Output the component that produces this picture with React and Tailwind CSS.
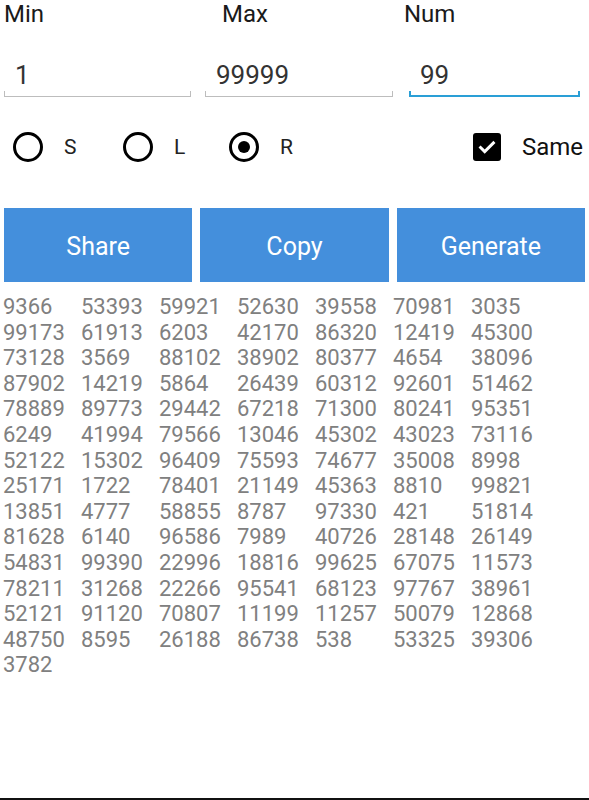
// Random number generator screen: range inputs, mode radios, actions and the result list.
const rows = [
    ['9366', '53393', '59921', '52630', '39558', '70981', '3035'],
    ['99173', '61913', '6203', '42170', '86320', '12419', '45300'],
    ['73128', '3569', '88102', '38902', '80377', '4654', '38096'],
    ['87902', '14219', '5864', '26439', '60312', '92601', '51462'],
    ['78889', '89773', '29442', '67218', '71300', '80241', '95351'],
    ['6249', '41994', '79566', '13046', '45302', '43023', '73116'],
    ['52122', '15302', '96409', '75593', '74677', '35008', '8998'],
    ['25171', '1722', '78401', '21149', '45363', '8810', '99821'],
    ['13851', '4777', '58855', '8787', '97330', '421', '51814'],
    ['81628', '6140', '96586', '7989', '40726', '28148', '26149'],
    ['54831', '99390', '22996', '18816', '99625', '67075', '11573'],
    ['78211', '31268', '22266', '95541', '68123', '97767', '38961'],
    ['52121', '91120', '70807', '11199', '11257', '50079', '12868'],
    ['48750', '8595', '26188', '86738', '538', '53325', '39306'],
    ['3782'],
];

function Field({ value, width, focused = false, className = '' }) {
    return (
        <div className={`flex flex-col ${width} ${className}`}>
            <div className="h-[30px] pl-[11px] text-[26px] leading-[30px] text-[#333]">{value}</div>
            <div
                className={
                    focused
                        ? 'mt-[1px] h-[6px] border-x-2 border-b-2 border-[#2a9fd6]'
                        : 'mt-[1px] h-[6px] border-x border-b border-[#bdbdbd]'
                }
            />
        </div>
    );
}

function Radio({ label, checked = false, width }) {
    return (
        <div className={`flex items-center ${width}`}>
            <div className="flex h-[30px] w-[30px] items-center justify-center rounded-full border-[3px] border-black">
                {checked && <div className="h-[12px] w-[12px] rounded-full bg-black" />}
            </div>
            <span className="ml-[21px] text-[21px] leading-none text-[#222]">{label}</span>
        </div>
    );
}

export default function App() {
    return (
        <div
            className="flex h-[800px] w-[589px] flex-col overflow-hidden bg-white"
            style={{ fontFamily: 'Roboto, "Noto Sans", sans-serif' }}
        >
            <div className="flex h-[26px] text-[24px] leading-[28px] text-[#1a1a1a]">
                <span className="w-[222px] pl-[4px]">Min</span>
                <span className="w-[182px]">Max</span>
                <span>Num</span>
            </div>

            <div className="mt-[34px] flex">
                <Field value="1" width="w-[187px]" className="ml-[4px]" />
                <Field value="99999" width="w-[188px]" className="ml-[14px]" />
                <Field value="99" width="w-[171px]" className="ml-[16px]" focused />
            </div>

            <div className="mt-[30px] flex h-[40px] items-center">
                <div className="ml-[13px] flex">
                    <Radio label="S" width="w-[110px]" />
                    <Radio label="L" width="w-[106px]" />
                    <Radio label="R" checked width="w-[100px]" />
                </div>
                <div className="ml-auto mr-[6px] flex items-center">
                    <div className="flex h-[28px] w-[28px] items-center justify-center rounded-[3px] bg-black">
                        <svg viewBox="0 0 24 24" className="h-[22px] w-[22px]" fill="none" stroke="white" strokeWidth="3.2" strokeLinecap="square">
                            <path d="M5 12.5l4.5 4.5L19 7.5" />
                        </svg>
                    </div>
                    <span className="ml-[21px] text-[24px] leading-none text-[#111]">Same</span>
                </div>
            </div>

            <div className="mt-[41px] flex gap-[8px] px-[4px]">
                {['Share', 'Copy', 'Generate'].map((label) => (
                    <button
                        key={label}
                        type="button"
                        className="flex h-[74px] flex-1 items-center justify-center bg-[#448fdc] pt-[3px] text-[25px] text-white"
                    >
                        {label}
                    </button>
                ))}
            </div>

            <div className="mt-[12px] pl-[3px] text-[22px] leading-[25.6px] text-[#808080]">
                {rows.map((row, i) => (
                    <div key={i} className="grid grid-cols-[repeat(7,78px)]">
                        {row.map((n, j) => (
                            <span key={j}>{n}</span>
                        ))}
                    </div>
                ))}
            </div>

            <div className="flex-1" />
            <div className="h-[2px] bg-[#111]" />
        </div>
    );
}
